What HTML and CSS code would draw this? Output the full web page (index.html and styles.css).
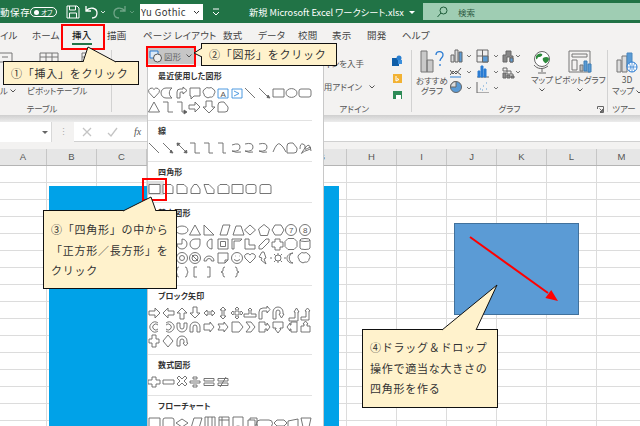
FILE: index.html
```html
<!DOCTYPE html>
<html lang="ja">
<head>
<meta charset="utf-8">
<title>Excel 図形の挿入</title>
<link rel="stylesheet" href="styles.css">
</head>
<body>
<div class="app">
  <header class="titlebar">
    <span class="autosave">動保存</span>
    <span class="toggle"><i class="knob"></i><span>オフ</span></span>
    <svg class="qat" width="70" height="18" viewBox="0 0 70 18" fill="none" stroke="#fff">
      <path d="M1 3h10l2 2v10H1z M3.500 3v4h6V3 M3.500 15v-5h7v5"/>
      <path d="M20 3v5h5 M20 8c4-5 11-3 11 2 0 3-2 5-5 5" stroke-width="1.300"/>
      <path d="M35 8l2 2 2-2" stroke-width=".8"/>
      <path d="M59 3v5h-5 M59 8c-4-5-11-3-11 2 0 3 2 5 5 5" stroke="#6fa587" stroke-width="1.300"/>
      <path d="M64 8l2 2 2-2" stroke="#6fa587" stroke-width=".8"/>
    </svg>
    <span class="fontbox">Yu Gothic<svg width="7" height="5" viewBox="0 0 7 5" fill="none" stroke="#333"><path d="M1 1l2.500 2.500L6 1"/></svg></span>
    <svg class="qatmore" width="8" height="8" viewBox="0 0 8 8" fill="none" stroke="#fff"><path d="M1 1h6 M1 4l3 3 3-3"/></svg>
    <span class="doc">新規 Microsoft Excel ワークシート.xlsx<i class="caret"></i></span>
    <div class="search">
      <svg width="11" height="12" viewBox="0 0 11 12" fill="none" stroke="#1e5c3a" stroke-width="1"><circle cx="6.500" cy="4.500" r="3.500"/><path d="M4 7l-3.500 4"/></svg>
      <span>検索</span>
    </div>
  </header>

  <nav class="tabs">
    <span class="t-file">イル</span><span class="t-home">ホーム</span><span class="t-ins">挿入</span><span class="t-draw">描画</span><span class="t-page">ページ レイアウト</span><span class="t-f">数式</span><span class="t-data">データ</span><span class="t-rev">校閲</span><span class="t-view">表示</span><span class="t-dev">開発</span><span class="t-help">ヘルプ</span>
  </nav>

  <section class="ribbon">
    <div class="group g-table">
      <svg class="g-ic" width="110" height="16" viewBox="0 0 110 16" fill="none" stroke="#777">
        <path d="M-2 3h14v9H-2z M2 7h6" /><path d="M40 3h18v10H40z M40 7h18 M46 3v10 M52 3v10"/><path d="M82 3h16v10H82z M82 7h16 M88 3v10"/>
      </svg>
      <div class="g-txt"><span class="ls-l">ル</span><svg class="chev" width="6" height="4" viewBox="0 0 6 4" fill="none" stroke="#555"><path d="M.5 .5L3 3 5.500 .5"/></svg><span class="ls-p">ピボットテーブル</span></div>
      <div class="g-label">テーブル</div>
    </div>
    <div class="group g-addin">
      <div class="addin-body">
        <div class="addin-text">
          <span class="get">アドインを入手</span>
          <span class="mine">個人用アドイン<svg class="chev" width="6" height="4" viewBox="0 0 6 4" fill="none" stroke="#555"><path d="M.5 .5L3 3 5.500 .5"/></svg></span>
        </div>
        <svg width="12" height="46" viewBox="0 0 12 46">
          <path d="M1 5h7v8H1z" fill="#0f5ea8"/><circle cx="8" cy="5" r="2.500" fill="#2a7fd0"/><path d="M7 7h4v4H7z" fill="#3b8fdc"/>
          <path d="M2 21h9v9H2z" fill="#f2b233"/><path d="M5 23v5l3-1.500-2-1" fill="none" stroke="#fff"/>
          <path d="M2 38h9v9H2z" fill="#2e8b57"/><path d="M5 42h5v4H5z" fill="#fff"/>
        </svg>
      </div>
      <div class="g-label addin-label">アドイン</div>
    </div>
    <div class="group g-chart">
      <div class="chart-body">
        <div class="rec">
          <svg width="24" height="24" viewBox="0 0 24 24" fill="#c9c9c9" stroke="#777"><path d="M1 1h6v21H1z M7 10h6v12H7z"/><path d="M16 5c0-5 7-4 7 0 0 3-3 3-3 6 M20 14v2" fill="none" stroke="#2b7cd3" stroke-width="1.300"/></svg>
          <span>おすすめ<br>グラフ</span>
        </div>
        <svg class="chart-ics" width="72" height="46" viewBox="0 0 72 46" fill="none" stroke="#666">
          <path d="M1 8h3v7H1z M5 3h3v12H5z" fill="#ddd"/><path d="M9 5h3v10H9z" fill="#5b9bd5"/>
          <path d="M0 28l3-4 3 3 5-6 M0 23l3 4 3-3 5 4" stroke="#555"/><path d="M0 30h11" stroke="#2b7cd3"/>
          <circle cx="6" cy="40" r="5.500" fill="#5b9bd5"/><path d="M6 40v-5.500a5.500 5.500 0 0 0-5.500 5.500z" fill="#ddd"/>
          <path d="M27 3h11v12H27z M27 9h5.500 M32.500 3v12" fill="#eee"/><path d="M32.500 9H38v6h-5.500z" fill="#5b9bd5"/>
          <path d="M27 30h12" /><path d="M28 24h2v6h-2z M31 19h2v11h-2z M34 22h2v8h-2z" fill="#2b7cd3" stroke="#2b7cd3"/>
          <path d="M27 35v11h12" /><path d="M30 42h1 M33 39h1 M36 36h1 M32 43h1 M36 42h1" stroke="#5b9bd5"/>
          <path d="M53 15V8h3V4h5v5h2v6h-3v-5h-3v5z" fill="#888"/><path d="M60 11h3v4h-3z" fill="#5b9bd5"/>
          <path d="M53 21h4v3h-4z M57 24h4v3h-4z M61 27h2v3" /><path d="M53 26h3v5h-3z M57 28h3v3h-3z M61 29h3v2h-3z" fill="#888"/>
          <path d="M17 8l2 2 2-2 M44 8l2 2 2-2 M66 8l2 2 2-2 M17 24l2 2 2-2 M44 24l2 2 2-2 M66 24l2 2 2-2 M17 40l2 2 2-2 M44 40l2 2 2-2" stroke="#555" stroke-width=".8"/>
        </svg>
        <div class="map">
          <svg width="18" height="24" viewBox="0 0 18 24" fill="none"><circle cx="9" cy="9" r="7.500" fill="#fff" stroke="#666"/><path d="M3 6c2-3 5-3 6-2s-1 3-3 3-1 3-3 2z M10 8c3-2 6-1 6 1s-3 5-4 4-3-3-2-5z" fill="#2e8b3d"/><path d="M1 15c3 4 9 5 14 1 M9 18v4 M5 23h8" stroke="#666"/></svg>
          <span>マップ</span>
          <svg class="chev" width="6" height="4" viewBox="0 0 6 4" fill="none" stroke="#555"><path d="M.5 .5L3 3 5.500 .5"/></svg>
        </div>
        <div class="pivot">
          <svg width="24" height="24" viewBox="0 0 24 24" fill="none" stroke="#777"><path d="M1 1h21v21H1z M4 4h15v3H4z M4 10h5v10H4z" fill="#f3f2f1"/><path d="M12 15h3v6h-3z" fill="#bbb"/><path d="M16 11h3v10h-3z" fill="#5b9bd5" stroke="#3f7fb5"/><path d="M20 14h3v8h-3z" fill="#5b9bd5" stroke="#3f7fb5"/></svg>
          <span>ピボットグラフ</span>
          <svg class="chev" width="6" height="4" viewBox="0 0 6 4" fill="none" stroke="#555"><path d="M.5 .5L3 3 5.500 .5"/></svg>
        </div>
      </div>
      <div class="g-label chart-label">グラフ<svg class="launch" width="7" height="7" viewBox="0 0 7 7" fill="none" stroke="#666"><path d="M.5 3V.5h6v6H3 M2.500 2.500l3 3 M3 5.500h2.500V3"/></svg></div>
    </div>
    <div class="group g-tour">
      <div class="tour-body">
        <svg width="22" height="22" viewBox="0 0 22 22" fill="none" stroke="#777"><path d="M1 8h4v12H1z M6 4h5v16H6z" fill="#ddd"/><path d="M11 1h5v14h-5z" fill="#5b9bd5" stroke="#4a88c0"/><circle cx="16" cy="15" r="5" fill="#fff" stroke="#2b7cd3"/><path d="M11 15h10 M16 10v10 M13 11c2 3 2 6 0 8 M19 11c-2 3-2 6 0 8" stroke="#2b7cd3" stroke-width=".7"/></svg>
        <span>3D<br>マップ <svg class="chev" width="6" height="4" viewBox="0 0 6 4" fill="none" stroke="#555"><path d="M.5 .5L3 3 5.500 .5"/></svg></span>
      </div>
      <div class="g-label">ツアー</div>
    </div>
  </section>
  <div class="ribbon-shadow"></div>

  <div class="fbar">
    <div class="namebox"><i class="caret dark"></i></div>
    <span class="grip">⋮</span>
    <div class="formula">
      <svg width="62" height="12" viewBox="0 0 62 12" fill="none" stroke="#c4c4c4" stroke-width="1.300"><path d="M2 2l8 8 M10 2l-8 8 M27 7l3 3 6-8"/></svg>
      <span class="fx">fx</span>
    </div>
  </div>

  <main class="sheet">
    <div class="cols">
      <span class="col-a">A</span><span>B</span><span>C</span><span>D</span><span>E</span><span>F</span><span>G</span><span>H</span><span>I</span><span>J</span><span>K</span><span>L</span><span>M</span>
    </div>
    <div class="cells"></div>
  </main>

  <div class="cyan-shape"></div>
  <div class="blue-rect"></div>
  <svg class="drag-arrow" width="100" height="80" viewBox="0 0 100 80"><path d="M3 2L81 58" stroke="#f00" stroke-width="2" fill="none"/><path d="M91 66L78.400 63 84.200 55z" fill="#f00"/></svg>

  <div class="shapes-btn">
    <svg width="14" height="13" viewBox="0 0 14 13" fill="none"><path d="M1 1h8v7H1z" fill="#dce9f6" stroke="#2b7cd3"/><circle cx="8.500" cy="8" r="4" fill="#eee" stroke="#555"/></svg>
    <span>図形</span>
    <svg class="chev" width="6" height="4" viewBox="0 0 6 4" fill="none" stroke="#555"><path d="M.5 .5L3 3 5.500 .5"/></svg>
  </div>

  <aside class="menu">
    <section class="sec">
      <h2>最近使用した図形</h2>
      <svg class="row" width="170" height="14" viewBox="0 0 170 14"><path d="M6 12L1 6.500A2.800 2.800 0 0 1 6 3.500 2.800 2.800 0 0 1 11 6.500z M24 2h-6a5 5 0 0 0 0 10h6a6 6 0 0 1 0-10z M29 12V6a3 3 0 0 1 3-3h3V1l4 3.500L35 8V6h-2a1 1 0 0 0-1 1v5z M42 2h10v8h-6l-3 3v-3h-1z M57 3a3 3 0 0 1 4-1 3 3 0 0 1 4 1 3 3 0 0 1 1 5 3 3 0 0 1-4 3 3 3 0 0 1-4 0 3 3 0 0 1-2-3 3 3 0 0 1 1-5z M97 2l10 10 M111 2l9 9 M125 3h11v8h-11z M138 7a5 4 0 1 0 11 0 5 4 0 1 0-11 0z M153 3h8a2 2 0 0 1 2 2v4a2 2 0 0 1-2 2h-8a2 2 0 0 1-2-2V5a2 2 0 0 1 2-2z"/><path d="M120 9l2 3-3-.5z" fill="#555"/><path class="blue" d="M70 3h10v9H70z M84 3h10v9H84z M86 5l5 2.500-5 2.500"/><text x="72.500" y="11" class="gl">A</text></svg>
      <svg class="row" width="170" height="14" viewBox="0 0 170 14"><path d="M6 2l5.500 10H.5z M15 2h5v10h5 M29 2h5v10h3 M41 5h6V2l5 5-5 5V9h-6z M58 1h6v6h3l-6 6-6-6h3z M70 12V5a3 3 0 0 1 3-3h3l4 5v2a3 3 0 0 1-3 3z"/><path d="M36 10l3 2-3 2z" fill="#555"/></svg>
    </section>
    <section class="sec">
      <h2>線</h2>
      <svg class="row" width="170" height="14" viewBox="0 0 170 14"><path d="M1 2l10 10 M15 2l9 9 M29 2l10 10 M42 2h5v10h5 M56 2h5v10h4 M70 2h5v10h3 M84 4q8-3 8 2t-8 4q4 2 9 1 M97 3q8-2 8 3t-8 4q4 2 8 1 M111 3q8-2 8 3t-8 4q4 2 8 1 M125 11q4-10 7-8t6 8 M139 12V5a3 3 0 0 1 3-3h3l4 5v2a3 3 0 0 1-3 3z M152 8q0-6 3-5t2 4 5-1q2 2-2 3t-6 3 3-5 6 3"/><path d="M23 9l2 3-3-.5z M29 2l3 .5-2.500 2.500z M39 12l-3-.5 2.500-2.500z" fill="#555"/></svg>
    </section>
    <section class="sec">
      <h2>四角形</h2>
      <div class="rect-row">
        <i class="hot"></i>
        <svg class="row" width="170" height="14" viewBox="0 0 170 14"><path d="M1 2.500h11v9H1z M15 2.500h8l2 2v7H15z M29 2.500h7l3 3v6H29z M43 11.500V7l3-4.500h3L52 7v4.500z M56 2.500h5l5 5v4H59z M70 4.500l2-2h7l2 2v7H70z M84 2.500h10a1 1 0 0 1 1 1v8H84z M98 4.500a2 2 0 0 1 2-2h6a2 2 0 0 1 2 2v5a2 2 0 0 1-2 2h-6a2 2 0 0 1-2-2z M112 4.500a2 2 0 0 1 2-2h7a2 2 0 0 1 2 2v7h-11z"/></svg>
      </div>
    </section>
    <section class="sec">
      <h2>基本図形</h2>
      <svg class="row" width="170" height="14" viewBox="0 0 170 14"><path d="M28 7a6 4 0 1 0 12 0 6 4 0 1 0-12 0z M47 2l5.500 10h-11z M56 2l10 10H56z M72 12l3-10h7l-3 10z M85 12l3-9h5l3 9z M102 2l5.500 5-5.500 5-5.500-5z M116 1.500l5.500 4.500-2 6.500h-7l-2-6.500z M127 2h6l3 5-3 5h-6l-3-5z"/><circle cx="143" cy="7" r="5.500"/><circle cx="157" cy="7" r="5.500"/><text x="141" y="9.500" class="gl">7</text><text x="155" y="9.500" class="gl">8</text></svg>
      <svg class="row" width="170" height="14" viewBox="0 0 170 14"><path d="M34 7V2a5 5 0 1 1-5 5z M47 2h5v5a5 5 0 1 1-5-5z M64 2a5 5 0 0 0 0 10z M70 2h10v10H70z M72.500 4.500h5v5h-5z M84 2h10l-2 2h-6v8l-2 0z M97 2h4v6h6v4H97z M111 12v-3l7-7h3v3l-7 7z M127 2h5v3h3v5h-3v3h-5v-3h-3V5h3z M140 1.500h6l3 3v5l-3 3h-6l-3-3v-5z M152 3a5 1.500 0 0 1 10 0v8a5 1.500 0 0 1-10 0z M152 3a5 1.500 0 0 0 10 0"/></svg>
      <svg class="row" width="170" height="14" viewBox="0 0 170 14"><circle cx="34" cy="7" r="5.500"/><circle cx="34" cy="7" r="2.500"/><circle cx="47" cy="7" r="5.500"/><circle cx="47" cy="7" r="3"/><path d="M44 4l6 6 M56 10a5 5 0 0 1 10 0h-2.500a2.500 2.500 0 0 0-5 0z M70 2h10v7l-3 3h-7z M77 12V9h3 M102 12l-5-5a2.800 2.800 0 0 1 5-3 2.800 2.800 0 0 1 5 3z M114 1l-3 5 3 1-1 2 5 4-2-5 2-1-2-6z M145 2c-5 1-5 9 0 10-7 1-9-9 0-10 M152 3a3 3 0 0 1 4-1 3 3 0 0 1 4 1 3 3 0 0 1 1 5 3 3 0 0 1-4 3 3 3 0 0 1-4 0 3 3 0 0 1-2-3 3 3 0 0 1 1-5z M127 7a3 3 0 1 0 6 0 3 3 0 1 0-6 0z M122 7h2 M136 7h2 M130 2v2 M130 10v2 M126 3l1.500 1.500 M134 3l-1.500 1.500 M126 11l1.500-1.500 M134 11l-1.500-1.500"/><circle cx="89" cy="7" r="5.500"/><path d="M86 8.500q3 3 6 0 M87 5h.5 M91 5h.5"/></svg>
      <svg class="row" width="170" height="14" viewBox="0 0 170 14"><path d="M31 2q-2 0-2 2v1l-1 2 1 2v1q0 2 2 2 M37 2q2 0 2 2v1l1 2-1 2v1q0 2-2 2 M49 2h-3v10h3 M59 2h3v10h-3 M77 2q-2 0-2 2v2l-2 1 2 1v2q0 2 2 2 M87 2q2 0 2 2v2l2 1-2 1v2q0 2-2 2"/></svg>
    </section>
    <section class="sec">
      <h2>ブロック矢印</h2>
      <svg class="row" width="170" height="14" viewBox="0 0 170 14"><path d="M1 5h6V2l5 5-5 5V9H1z M26 5h-6V2l-5 5 5 5V9h6z M32 13V7h-3l5-5 5 5h-3v6z M45 1v6h-3l5 5 5-5h-3V1z M56 7l3-3v2h5V4l3 3-3 3V8h-5v2z M75 1l3 3h-2v6h2l-3 3-3-3h2V4h-2z M89 1l2 2h-1v3h3V5l2 2-2 2V8h-3v3h1l-2 2-2-2h1V8h-3v1l-2-2 2-2v1h3V3h-1z M102 2l2 2h-1v4h5v3H96V8h5V4h-1z M111 13V6a4 4 0 0 1 4-4h4V0l3 3.500L119 7V5h-4a1 1 0 0 0-1 1v7z M125 13V6a5 5 0 0 1 10 0v2h1l-2.500 4L131 8h1V6a2 2 0 0 0-4 0v7z M141 12h6V6h-1l2.500-4L151 6h-1v9h-9z M153 11h5V5h-1l2.500-3L162 5h-1v9h-8z"/></svg>
      <svg class="row" width="170" height="14" viewBox="0 0 170 14"><path d="M10 3a5 5 0 1 0 0 8 M10 5a3 3 0 1 0 0 4 M18 3a5 5 0 1 1 0 8 M18 5a3 3 0 1 1 0 4 M29 3v4a5 5 0 0 0 10 0V3h-3v4a2 2 0 0 1-4 0V3z M42 12V7a5 5 0 0 1 10 0v5h-3V7a2 2 0 0 0-4 0v5z M56 4h6V2l4 5-4 5v-2h-6z M70 4h6V2l4 5-4 5v-2h-6l2-3z M84 2h7l4 5-4 5h-7z M98 2h5l4 5-4 5h-5l4-5z M111 2h6v3h2V3l3 4-3 4V9h-2v3h-6z M125 2h10v6h-3v1h1l-3 4-3-4h1V8h-3z M139 7l3-4v2h1V2h6v10h-6V9h-1v2z M153 12V6h3V4h-1l2.500-3L160 4h-1v2h3v6z"/></svg>
      <svg class="row" width="170" height="14" viewBox="0 0 170 14"><path d="M4 1h4v4h3v4H8v4H4V9H1V5h3z M20 1l5 6-5 6-5-6z M29 12V7a5 5 0 0 1 10 0v2h1l-2.500 3L35 9h1V7a2 2 0 0 0-4 0v5z"/></svg>
    </section>
    <section class="sec">
      <h2>数式図形</h2>
      <svg class="row" width="170" height="14" viewBox="0 0 170 14"><path d="M4 2h4v3h4v4H8v3H4V9H0V5h4z M15 5h11v4H15z M31 1l3 3 3-3 2 2-3 3 3 3-2 2-3-3-3 3-2-2 3-3-3-3z M42 6h10v2H42z M45 2h4v2h-4z M45 10h4v2h-4z M56 3.500h10V6H56z M56 8h10v2.500H56z M70 3.500h10V6H70z M70 8h10v2.500H70z M72 12l6-10"/></svg>
    </section>
    <section class="sec last">
      <h2>フローチャート</h2>
      <svg class="row" width="170" height="14" viewBox="0 0 170 14"><path d="M1 2h11v10H1z M15 4a2 2 0 0 1 2-2h7a2 2 0 0 1 2 2v8H15z M34 3l6 4-6 4-6-4z M43 12l3-10h8l-3 10z M57 1h10v11H57z M60 1v11 M64 1v11 M71 1h10v11H71z M71 4h10 M74 1v11 M85 1h10v10q-5-2-10 0z M100 4h7v7h-7z M102 4V2h7v7h-2 M112 4h9a3 3 0 0 1 0 7h-9a3 3 0 0 1 0-7z M126 7l3-3h7l3 3-3 3h-7z M140 5l10-2v9h-10z M153 2h10l-2 9h-6z"/></svg>
    </section>
  </aside>

  <i class="red-box rb-ins"></i>
  <i class="red-box rb-btn"></i>
  <i class="red-box rb-rect"></i>

  <div class="callout c1"><svg class="tail" width="36" height="17" viewBox="0 0 36 17"><path d="M1 16L6 1 34 16z" class="tail-f"/><path d="M1 16L6 1 34 16" class="tail-s"/></svg>①「挿入」をクリック</div>
  <div class="callout c2"><svg class="tail" width="10" height="12" viewBox="0 0 10 12"><path d="M9 1L1 6 9 10z" class="tail-f"/><path d="M9 1L1 6 9 10" class="tail-s"/></svg>②「図形」をクリック</div>
  <div class="callout c3"><svg class="tail" width="36" height="16" viewBox="0 0 36 16"><path d="M1 15L29 1 34 15z" class="tail-f"/><path d="M1 15L29 1 34 15" class="tail-s"/></svg>③「四角形」の中から<br>「正方形／長方形」を<br>クリック</div>
  <div class="callout c4"><svg class="tail" width="58" height="47" viewBox="0 0 58 47"><path d="M1 46L56 1 35 46z" class="tail-f"/><path d="M1 46L56 1 35 46" class="tail-s"/></svg>④ドラッグ＆ドロップ<br>操作で適当な大きさの<br>四角形を作る</div>
</div>
</body>
</html>
```
FILE: styles.css
```css
* { box-sizing: border-box; }
html, body { margin: 0; padding: 0; }
body { width: 640px; height: 426px; overflow: hidden; background: #fff; }
.app {
  position: relative; width: 640px; height: 426px; overflow: hidden;
  font-family: "Noto Sans CJK JP", "Noto Sans", sans-serif;
  font-feature-settings: "palt"; color: #444;
}
svg { display: block; flex: none; }

/* title bar */
.titlebar { display: flex; align-items: center; height: 23px; background: #217346; color: #fff; font-size: 9.500px; padding-top: 1px; }
.autosave { width: 30px; letter-spacing: .6px; white-space: nowrap; }
.toggle { display: flex; align-items: center; gap: 2px; width: 27px; height: 10px; border: 1px solid #fff; border-radius: 5px; padding-left: 3px; font-size: 6.500px; line-height: 1; }
.knob { width: 5px; height: 5px; border-radius: 50%; background: #fff; flex: none; }
.qat { margin-left: 9px; }
.fontbox { display: flex; align-items: center; justify-content: space-between; width: 63px; height: 16px; margin-left: 4px; padding: 0 3px 0 1px; background: #fff; color: #333; font-size: 9.500px; letter-spacing: .4px; }
.qatmore { margin-left: 9px; }
.doc { display: flex; align-items: center; margin-left: 29px; white-space: nowrap; font-size: 9.200px; }
.caret { display: block; width: 0; height: 0; margin-left: 5px; border: 3px solid transparent; border-top-color: #fff; border-bottom-width: 0; }
.caret.dark { border-top-color: #666; margin: 0; }
.search { display: flex; align-items: center; align-self: flex-start; gap: 10px; width: 217px; height: 17px; margin: 2px 0 0 auto; padding-left: 14px; background: #9fcdb3; color: #2c5a42; font-size: 8.500px; }

/* tabs */
.tabs { display: flex; align-items: center; height: 24px; background: #f3f2f1; font-size: 9.500px; line-height: 24px; white-space: nowrap; }
.tabs span { display: block; flex: none; letter-spacing: .2px; }
.t-file { width: 32px; }
.t-home { width: 40px; }
.t-ins { width: 35px; position: relative; font-weight: 500; color: #222; }
.t-ins::after { content: ""; position: absolute; left: 0; top: 20px; width: 20px; height: 2px; background: #217346; }
.t-draw { width: 36px; }
.t-page { width: 80px; }
.t-f { width: 35px; }
.t-data { width: 40px; }
.t-rev { width: 34px; }
.t-view { width: 35px; }
.t-dev { width: 35px; }

/* ribbon */
.ribbon { display: flex; height: 68px; padding: 3px 0; background: #f3f2f1; font-size: 8.500px; line-height: 11px; color: #555; }
.group { display: flex; flex-direction: column; flex: none; height: 62px; border-right: 1px solid #d2d2d2; white-space: nowrap; }
.g-label { height: 14px; margin-top: auto; margin-bottom: -3px; font-size: 8.500px; line-height: 14px; text-align: center; color: #555; }
.g-table { width: 112px; }
.g-txt { display: flex; align-items: center; margin-top: 19px; }
.ls-l { width: 8px; }
.ls-p { margin-left: 11px; }
.g-table .chev { margin-left: 2px; }
.g-table .g-label { padding-right: 27px; }
.g-addin { width: 300px; }
.addin-body { display: flex; justify-content: flex-end; gap: 16px; padding: 3px 8px 0 0; height: 48px; }
.addin-text { display: flex; flex-direction: column; align-items: flex-end; padding-top: 5px; gap: 12px; }
.get { padding-right: 11px; }
.mine { display: flex; align-items: center; gap: 7px; }
.addin-label { text-align: right; padding-right: 42px; }
.g-chart { width: 196px; position: relative; }
.chart-body { display: flex; height: 48px; }
.rec { display: flex; flex-direction: column; align-items: center; flex: none; width: 36px; margin-left: 2px; text-align: center; line-height: 10px; gap: 1px; }
.chart-ics { margin: -3px 0 0 0; }
.map, .pivot { display: flex; flex-direction: column; align-items: center; flex: none; line-height: 10px; }
.map { width: 34px; margin-left: 3px; }
.map span, .pivot span { display: block; height: 10px; }
.map .chev, .pivot .chev { margin-top: 4px; }
.pivot { width: 42px; }
.launch { position: absolute; right: 3px; bottom: -1px; }
.g-tour { border-right: 0; width: 32px; }
.tour-body { display: flex; flex-direction: column; align-items: center; height: 48px; padding: 2px 0 0 6px; text-align: center; line-height: 11px; }
.tour-body .chev { display: inline-block; vertical-align: middle; }
.ribbon-shadow { height: 7px; background: linear-gradient(#cfcfcf, #ececec); }

/* formula bar */
.fbar { display: flex; align-items: flex-start; height: 27px; background: #f3f2f1; }
.namebox { display: flex; align-items: center; justify-content: flex-end; width: 52px; height: 20px; padding-right: 3px; background: #fff; border-right: 1px solid #d8d8d8; }
.grip { width: 22px; text-align: center; font-size: 9px; line-height: 20px; color: #aaa; }
.formula { display: flex; align-items: center; flex: 1; height: 20px; padding-left: 7px; background: #fff; border-bottom: 1px solid #d0d0d0; }
.fx { margin-left: -9px; font: italic 10px "Liberation Serif", serif; color: #555; }

/* sheet */
.cols { display: flex; height: 17px; background: #e6e6e6; border-bottom: 1px solid #b4b4b4; font: 9.500px/16px "Liberation Sans", sans-serif; color: #555; }
.cols span { flex: none; width: 50px; text-align: center; border-right: 1px solid #c6c6c6; }
.cols .col-a { width: 47px; }
.cells {
  height: 260px;
  background-color: #fff;
  background-image:
    repeating-linear-gradient(to right, transparent 0, transparent 49px, #dcdcdc 49px, #dcdcdc 50px),
    repeating-linear-gradient(to bottom, transparent 0, transparent 16px, #dcdcdc 16px, #dcdcdc 17px);
  background-position: -3px 0, 0 0;
}

/* drawn objects on the sheet */
.cyan-shape { position: absolute; left: 49px; top: 186px; width: 290px; height: 240px; background: #00a2e8; }
.blue-rect { position: absolute; left: 454px; top: 223px; width: 125px; height: 92px; background: #5b9bd5; border: 1px solid #41719c; }
.drag-arrow { position: absolute; left: 467px; top: 235px; }

/* shapes button and menu */
.shapes-btn { position: absolute; left: 148px; top: 48px; display: flex; align-items: center; gap: 1px; width: 46px; height: 16px; padding-left: 1px; background: #c6c6c6; font-size: 8.500px; color: #666; }
.shapes-btn .chev { margin-left: 4px; }
.menu { position: absolute; left: 147px; top: 66px; width: 177px; height: 360px; padding-top: 3px; background: #fff; border: solid #c8c8c8; border-width: 0 1px; overflow: hidden; }
.sec { padding-bottom: 6px; margin-right: 11px; border-bottom: 1px solid #e2e2e2; margin-bottom: 3px; }
.sec.last { border: 0; }
.sec h2 { height: 14px; margin: 0 0 3px; padding-left: 10px; font-size: 8px; line-height: 14px; font-weight: 700; color: #333; letter-spacing: .15px; }
.row { fill: #fff; stroke: #666; stroke-width: .9; overflow: visible; }
.row .blue { stroke: #3b8fdc; }
.row .gl { font: 8px "Liberation Sans", sans-serif; fill: #555; stroke: none; }
.rect-row { position: relative; }
.hot { position: absolute; left: 0; top: -1px; width: 16px; height: 14px; background: #ddd; }
.rect-row .row { position: relative; }

/* annotations */
.red-box { position: absolute; display: block; border: 2px solid #f00; }
.rb-ins { left: 61px; top: 24px; width: 44px; height: 26px; }
.rb-btn { left: 146px; top: 46px; width: 50px; height: 21px; }
.rb-rect { left: 142px; top: 178px; width: 25px; height: 23px; }
.callout { position: absolute; background: #fff2cc; border: 1px solid #111; color: #333; font-size: 11px; letter-spacing: .75px; white-space: nowrap; line-height: 20.500px; font-feature-settings: normal; }
.tail { position: absolute; overflow: visible; }
.tail-f { fill: #fff2cc; stroke: none; }
.tail-s { fill: none; stroke: #111; stroke-width: 1; }
.c1 { left: 3px; top: 61px; width: 136px; height: 24px; padding-left: 7px; line-height: 22px; }
.c1 .tail { left: 78px; top: -16px; }
.c2 { left: 201px; top: 43px; width: 136px; height: 23px; padding-left: 7px; line-height: 21px; }
.c2 .tail { left: -9px; top: 3px; }
.c3 { left: 43px; top: 210px; width: 134px; height: 79px; padding: 8px 0 0 7px; }
.c3 .tail { left: 78px; top: -15px; }
.c4 { left: 362px; top: 329px; width: 136px; height: 79px; padding: 7px 0 0 7px; }
.c4 .tail { left: 78px; top: -46px; }
```
